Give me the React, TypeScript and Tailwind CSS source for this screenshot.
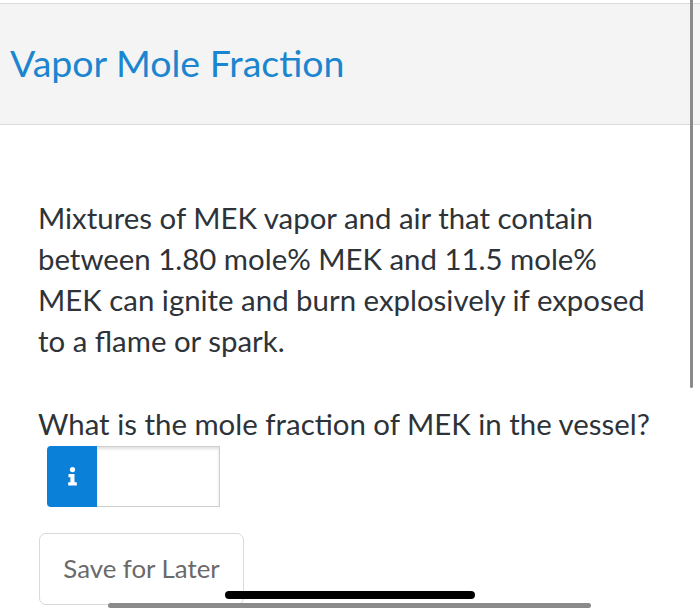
import React from "react";

export default function App() {
  return (
    <div className="relative w-[700px] h-[613px] overflow-hidden bg-white" style={{ fontFamily: "Lato, 'Open Sans', sans-serif" }}>
      <div className="h-[3px]" />
      <div className="h-[122px] border-t border-b border-[#dcdcdc] bg-[#f4f4f4] flex items-center pl-[10px] pb-[2px]">
        <h1 className="text-[37.5px] leading-none text-[#1b86cf]">Vapor Mole Fraction</h1>
      </div>
      <div className="pl-[38px] pt-[72px]">
        <div className="text-[29.4px] leading-[41px] text-[#2d3338] whitespace-nowrap">
          <div>Mixtures of MEK vapor and air that contain</div>
          <div>between 1.80 mole% MEK and 11.5 mole%</div>
          <div>MEK can ignite and burn explosively if exposed</div>
          <div>to a flame or spark.</div>
        </div>
        <div className="mt-[42px] text-[29.4px] leading-[41px] text-[#2d3338] whitespace-nowrap">
          What is the mole fraction of MEK in the vessel?
        </div>
        <div className="mt-[2px] ml-[9px] flex w-[173px] h-[61px]">
          <div className="w-[50px] h-full bg-[#0b80d8] rounded-l-[4px] flex items-center justify-center">
            <svg width="11" height="19" viewBox="0 0 11 19" fill="white">
              <circle cx="5.5" cy="2.6" r="2.6" />
              <path d="M1.5 7 H7.5 V15.2 H9.8 V18.5 H1.2 V15.2 H3.4 V10.2 H1.5 Z" />
            </svg>
          </div>
          <div className="flex-1 h-full border border-l-0 border-[#cfcfcf] bg-white shadow-[inset_0_2px_3px_rgba(0,0,0,0.12)]" />
        </div>
        <div className="mt-[26px] ml-[1px] w-[205px] h-[72px] border border-[#d9d9d9] rounded-[7px] flex items-center justify-center pb-[1px]">
          <span className="text-[25.8px] text-[#6a6a6a]">Save for Later</span>
        </div>
      </div>
      <div className="absolute left-[690px] top-0 w-[3px] h-[388px] bg-[#8a8a8a] rounded-b-full" />
      <div className="absolute left-[225px] top-[591px] w-[250px] h-[8px] bg-black rounded-full" />
      <div className="absolute left-[108px] top-[603px] w-[483px] h-[5px] bg-[#8a8a8a] rounded-full" />
    </div>
  );
}
